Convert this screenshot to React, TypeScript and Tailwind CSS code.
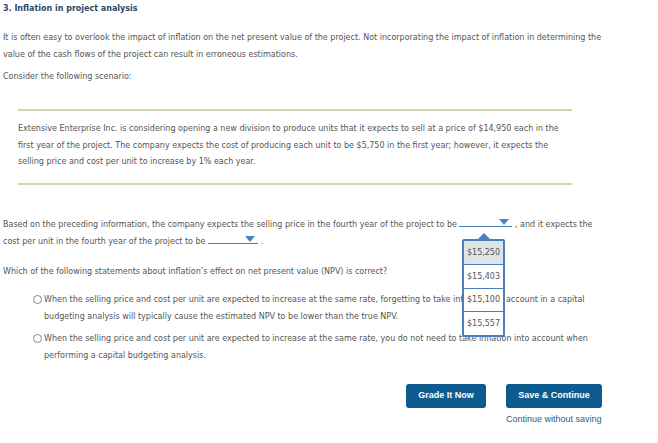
import React from 'react';

const font = { fontFamily: '"DejaVu Sans", Verdana, sans-serif' };

function Blank({ width }: { width: string }) {
  // underline blank with a small blue caret, like the inline select
  return (
    <span className={`relative inline-block h-[10px] align-baseline border-b border-[#4a7fb0] ${width}`}>
      <svg className="absolute right-[3px] top-[2px]" width="10" height="6" viewBox="0 0 10 6">
        <path d="M0 0 L10 0 L5 6 Z" fill="#4a86c0" />
      </svg>
    </span>
  );
}

function Radio() {
  return <span className="mt-[4px] h-[9px] w-[9px] shrink-0 rounded-full border border-[#8a8a8a] bg-white" />;
}

const options = ['$15,250', '$15,403', '$15,100', '$15,557'];

export default function App() {
  return (
    <div className="min-h-screen w-[658px] bg-white pl-[3px] text-[8px] text-[#555] whitespace-nowrap" style={font}>
      <div className="font-bold leading-[17px] text-[#2c4866]">3. Inflation in project analysis</div>

      <p className="mt-[12px] leading-[17px]">
        It is often easy to overlook the impact of inflation on the net present value of the project. Not incorporating the impact of inflation in determining the
        <br />
        value of the cash flows of the project can result in erroneous estimations.
      </p>

      <p className="mt-[5px] leading-[17px]">Consider the following scenario:</p>

      <div className="ml-[15px] mt-[24px] w-[554px] border-y-2 border-[#d8d1b3] pt-[10px] pb-[12px] leading-[16.5px]">
        Extensive Enterprise Inc. is considering opening a new division to produce units that it expects to sell at a price of $14,950 each in the
        <br />
        first year of the project. The company expects the cost of producing each unit to be $5,750 in the first year; however, it expects the
        <br />
        selling price and cost per unit to increase by 1% each year.
      </div>

      <div className="relative mt-[31px] leading-[17px]">
        Based on the preceding information, the company expects the selling price in the fourth year of the project to be <Blank width="w-[53px]" /> , and it expects the
        <br />
        cost per unit in the fourth year of the project to be <Blank width="w-[50px]" /> .

        <div className="absolute left-[459px] top-[17px] z-10 w-[43px]">
          <svg className="mx-auto block" width="12" height="6" viewBox="0 0 12 6">
            <path d="M0 6 L6 0 L12 6 Z" fill="#4a80b5" />
          </svg>
          <div className="overflow-hidden rounded-[2px] border-2 border-[#4a80b5] bg-white">
            {options.map((o, i) => (
              <div
                key={o}
                className={`flex h-[23.5px] items-center justify-center ${i > 0 ? 'border-t border-[#4a80b5]' : ''} ${i === 0 ? 'bg-[#dfe4e8]' : 'bg-white'}`}
              >
                {o}
              </div>
            ))}
          </div>
        </div>
      </div>

      <p className="mt-[13px] leading-[17px]">Which of the following statements about inflation’s effect on net present value (NPV) is correct?</p>

      <div className="ml-[30px] mt-[11px] flex gap-[1px] leading-[17px]">
        <Radio />
        <div className="pl-[1px]">
          When the selling price and cost per unit are expected to increase at the same rate, forgetting to take inflation into account in a capital
          <br />
          budgeting analysis will typically cause the estimated NPV to be lower than the true NPV.
        </div>
      </div>

      <div className="ml-[30px] mt-[5px] flex gap-[1px] leading-[17px]">
        <Radio />
        <div className="pl-[1px]">
          When the selling price and cost per unit are expected to increase at the same rate, you do not need to take inflation into account when
          <br />
          performing a capital budgeting analysis.
        </div>
      </div>

      <div className="mt-[20px] flex w-[601px] justify-end gap-[20px]" style={{ fontFamily: '"Liberation Sans", Arial, sans-serif' }}>
        <button className="h-[24px] w-[80px] rounded-[3px] bg-[#0d5b8f] text-[9px] font-bold text-white">Grade It Now</button>
        <div className="flex w-[98px] flex-col">
          <button className="h-[24px] w-[96px] rounded-[3px] bg-[#0d5b8f] text-[9px] font-bold text-white">Save &amp; Continue</button>
          <span className="mt-[5px] text-[9px] leading-[12px] text-[#1f5f94]">Continue without saving</span>
        </div>
      </div>
    </div>
  );
}
